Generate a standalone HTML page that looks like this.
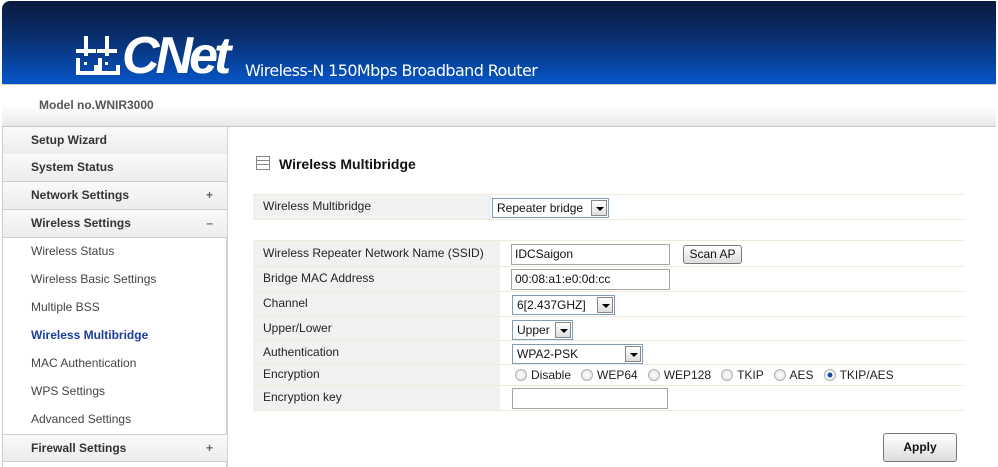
<!DOCTYPE html><html><head><meta charset="utf-8"><style>
*{margin:0;padding:0;box-sizing:border-box}
body{width:998px;height:467px;overflow:hidden;background:#fff;font-family:"Liberation Sans",Arial,sans-serif;font-size:12px;color:#222;position:relative}
.a{position:absolute}
#hdr{left:2px;top:1px;width:994px;height:83px;background:linear-gradient(#0b1a3e 0%,#083070 45%,#0555c8 100%);border-top-left-radius:8px}
#model{left:2px;top:84px;width:994px;height:43px;background:linear-gradient(#fff 50%,#e8e8e8);border-top:1px solid #ccc;border-bottom:1px solid #c8c8c8}
#side{left:2px;top:127px;width:226px;height:340px;border-right:2px solid #d4d4d4;border-left:1px solid #ccc}
.it{position:absolute;left:0;width:224px;height:28px;line-height:27px;padding-left:28px;font-size:12px}
.m{font-weight:bold;color:#333;background:linear-gradient(#fafafa,#ececec);border-bottom:1px solid #cfcfcf}
.s{color:#444}
.pm{position:absolute;right:14px;top:0;font-weight:bold;color:#666}
.row{position:absolute;left:253px;width:711px;border-top:1px solid #f0e8d8;}
.lab{position:absolute;left:0;top:0;bottom:0;background:#f1f1f1;padding-left:10px;color:#222}
.inp{position:absolute;border:1px solid #a5a5a5;background:#fff;height:21px;padding-left:3px;line-height:19px;font-size:12px;color:#111}
.sel{position:absolute;border:1px solid #7f9db9;background:#fff;height:20px;line-height:18px;padding-left:4px;font-size:12px;color:#111}
.arr{position:absolute;right:1px;top:1px;width:16px;height:16px;border:1px solid #888;background:linear-gradient(#fff,#ddd)}
.arr:after{content:"";position:absolute;left:4px;top:6px;border-left:4px solid transparent;border-right:4px solid transparent;border-top:4px solid #000}
.rad{display:inline-block;width:12px;height:12px;border-radius:50%;border:1px solid #b0b0b0;background:radial-gradient(#fff,#ddd);vertical-align:-2px;margin-right:4px}
.btn{position:absolute;border:1px solid #777;border-radius:3px;background:linear-gradient(#fff,#dcdcdc);text-align:center;color:#111}
</style></head><body>
<div id="hdr" class="a"></div>
<svg class="a" style="left:74px;top:36px" width="50" height="44" viewBox="0 0 50 44"><g fill="#fff">
<path d="M10 0h4v13h8v4h-8v3h-4v-3H2v-4h8z"/><path d="M2 22h4v13h14v-6h4v10H2z"/><rect x="10" y="26" width="3" height="3"/>
<path d="M31 0h4v13h8v4h-8v3h-4v-3h-8v-4h8z"/><path d="M24 22h4v13h14v-6h4v10H24z"/><rect x="31" y="26" width="3" height="3"/></g></svg>
<div class="a" style="left:122px;top:26px;font-size:52px;font-weight:bold;font-style:italic;color:#fff;letter-spacing:-4px;line-height:60px">CNet</div>
<div class="a" style="left:245px;top:61px;font-size:16px;color:#fff;font-family:'DejaVu Sans',sans-serif;letter-spacing:-0.6px">Wireless-N 150Mbps Broadband Router</div>
<div id="model" class="a"></div>
<div class="a" style="left:39px;top:98px;font-weight:bold;color:#555;font-size:12px">Model no.WNIR3000</div>
<div id="side" class="a">
<div class="it m" style="top:0">Setup Wizard</div>
<div class="it m" style="top:27px">System Status</div>
<div class="it m" style="top:55px">Network Settings<span class="pm">+</span></div>
<div class="it m" style="top:83px">Wireless Settings<span class="pm">–</span></div>
<div class="it s" style="top:111px">Wireless Status</div>
<div class="it s" style="top:139px">Wireless Basic Settings</div>
<div class="it s" style="top:167px">Multiple BSS</div>
<div class="it s" style="top:195px;color:#1a3e9c;font-weight:bold">Wireless Multibridge</div>
<div class="it s" style="top:223px">MAC Authentication</div>
<div class="it s" style="top:251px">WPS Settings</div>
<div class="it s" style="top:279px">Advanced Settings</div>
<div class="it m" style="top:307px;border-top:1px solid #cfcfcf">Firewall Settings<span class="pm">+</span></div>
</div>
<svg class="a" style="left:256px;top:156px" width="14" height="14"><g fill="none" stroke="#888"><rect x="0.5" y="0.5" width="13" height="13"/><path d="M1 4.5h12M1 8.5h12"/></g></svg>
<div class="a" style="left:279px;top:156px;font-size:14px;font-weight:bold;color:#111">Wireless Multibridge</div>
<div class="row" style="top:194px;height:26px;border-bottom:1px solid #f0e8d8"><div class="lab" style="width:238px;line-height:23px">Wireless Multibridge</div>
<div class="sel" style="left:239px;top:3px;width:117px">Repeater bridge<div class="arr"></div></div></div>
<div class="row" style="top:240px;height:26px"><div class="lab" style="width:247px;line-height:25px">Wireless Repeater Network Name (SSID)</div><div class="inp" style="left:258px;top:3px;width:159px">IDCSaigon</div><div class="btn" style="left:430px;top:4px;width:59px;height:19px;line-height:17px">Scan AP</div></div>
<div class="row" style="top:266px;height:25px"><div class="lab" style="width:247px;line-height:23px">Bridge MAC Address</div><div class="inp" style="left:258px;top:2px;width:159px">00:08:a1:e0:0d:cc</div></div>
<div class="row" style="top:291px;height:25px"><div class="lab" style="width:247px;line-height:22px">Channel</div><div class="sel" style="left:259px;top:3px;width:103px">6[2.437GHZ]<div class="arr"></div></div></div>
<div class="row" style="top:316px;height:24px"><div class="lab" style="width:247px;line-height:22px">Upper/Lower</div><div class="sel" style="left:259px;top:3px;width:61px">Upper<div class="arr"></div></div></div>
<div class="row" style="top:340px;height:24px"><div class="lab" style="width:247px;line-height:22px">Authentication</div><div class="sel" style="left:259px;top:3px;width:131px">WPA2-PSK<div class="arr"></div></div></div>
<div class="row" style="top:364px;height:21px"><div class="lab" style="width:247px;line-height:19px">Encryption</div><div class="a" style="left:262px;top:3px;white-space:nowrap"><span class="rad"></span>Disable &nbsp; <span class="rad"></span>WEP64 &nbsp; <span class="rad"></span>WEP128 &nbsp; <span class="rad"></span>TKIP &nbsp; <span class="rad"></span>AES &nbsp; <span class="rad" style="background:radial-gradient(#1a4aa0 30%,#fff 40%,#ddd)"></span>TKIP/AES</div></div>
<div class="row" style="top:385px;height:26px;border-bottom:1px solid #f0e8d8"><div class="lab" style="width:247px;line-height:22px">Encryption key</div><div class="inp" style="left:259px;top:2px;width:156px"></div></div>
<div class="btn" style="left:883px;top:433px;width:74px;height:29px;line-height:27px;font-weight:bold">Apply</div>
</body></html>
